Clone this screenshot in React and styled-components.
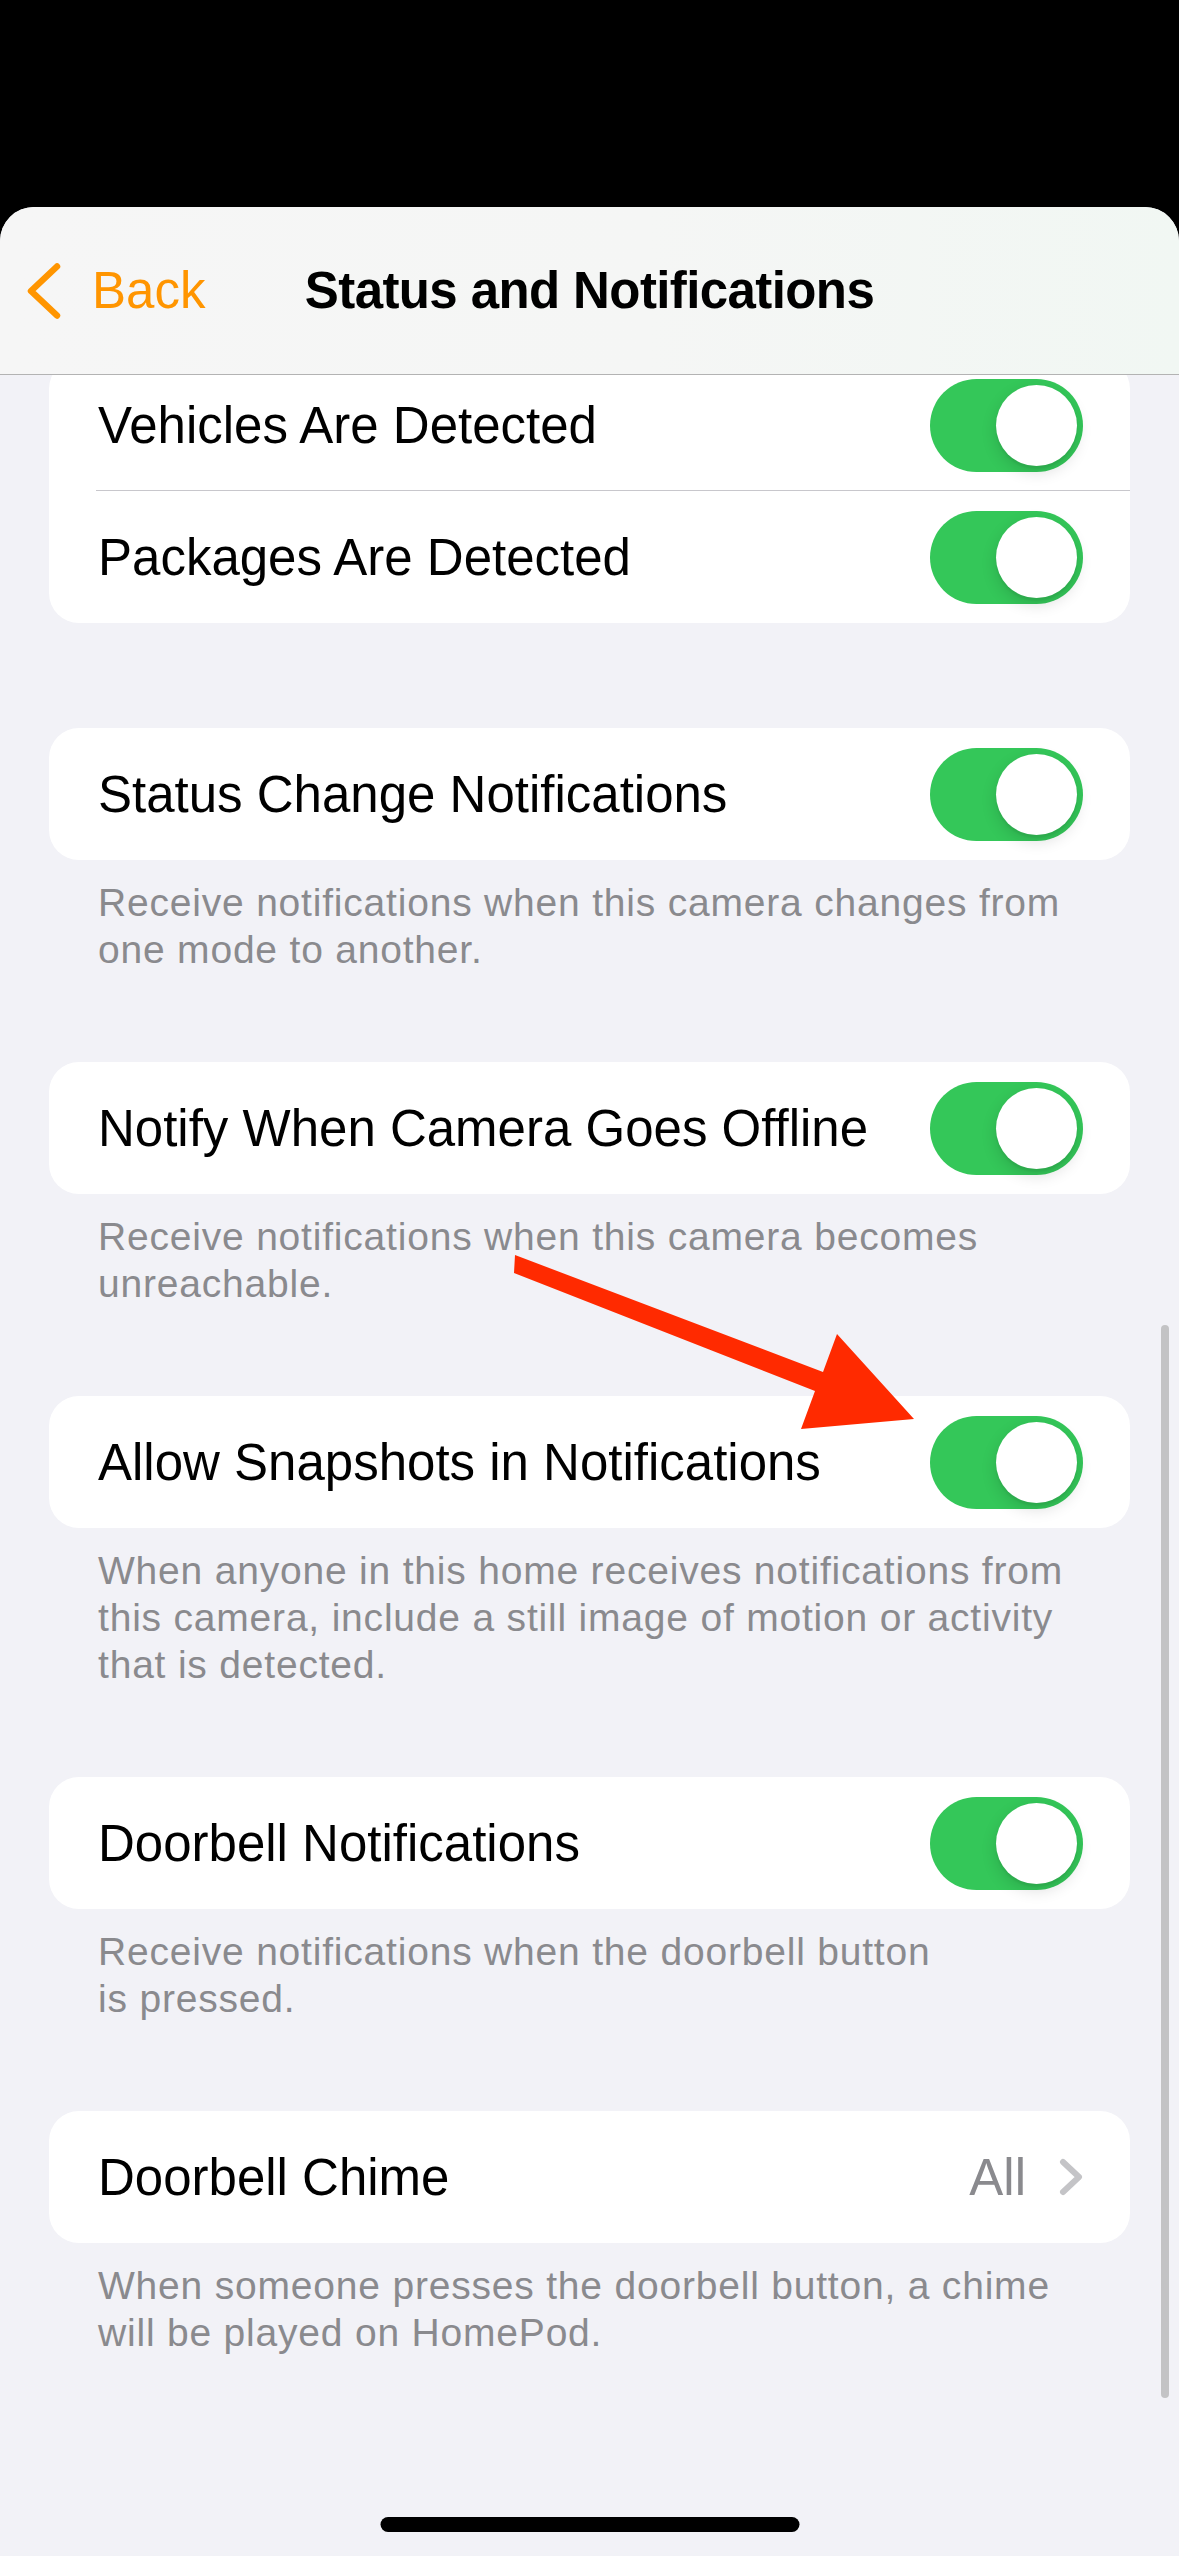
import styled, { createGlobalStyle } from "styled-components";

const GlobalStyle = createGlobalStyle`
  html, body {
    margin: 0;
    padding: 0;
    background: #000;
  }
  body {
    font-family: "Liberation Sans", Arial, sans-serif;
    -webkit-font-smoothing: antialiased;
  }
`;

const Phone = styled.div`
  position: relative;
  width: 1179px;
  height: 2556px;
  background: #000;
  display: flex;
  flex-direction: column;
  overflow: hidden;
`;

const StatusArea = styled.div`
  height: 207px;
  flex-shrink: 0;
`;

const Sheet = styled.div`
  position: relative;
  flex: 1;
  display: flex;
  flex-direction: column;
  min-height: 0;
  background: #f2f2f7;
  border-radius: 34px 34px 0 0;
  overflow: hidden;
`;

const NavBar = styled.header`
  position: relative;
  z-index: 2;
  height: 167px;
  flex-shrink: 0;
  display: grid;
  grid-template-columns: 1fr auto 1fr;
  align-items: center;
  background: linear-gradient(90deg, #f6f6f6 0%, #f5f6f5 55%, #f1f7f3 100%);
  border-bottom: 1px solid #b3b3b3;
`;

const BackButton = styled.button`
  display: flex;
  align-items: center;
  gap: 30px;
  justify-self: start;
  padding: 0 0 0 26px;
  border: none;
  background: none;
  color: #ff9500;
  font-family: inherit;
  font-size: 51px;
  cursor: pointer;
`;

const Title = styled.h1`
  margin: 0;
  font-size: 51px;
  font-weight: 700;
  letter-spacing: -0.6px;
  color: #000;
`;

const Content = styled.main`
  flex: 1;
  overflow: hidden;
  padding: 0 49px;
`;

const Section = styled.section`
  margin-bottom: ${(p) => (p.$hasFooter ? "89px" : "105px")};
  &:first-child {
    margin-top: -16px;
  }
`;

const Card = styled.div`
  background: #fff;
  border-radius: 30px;
  overflow: hidden;
`;

const Row = styled.div`
  position: relative;
  height: 132px;
  display: flex;
  align-items: center;
  justify-content: space-between;
  padding: 0 47px 0 49px;
  &::after {
    content: "";
    display: ${(p) => (p.$divider ? "block" : "none")};
    position: absolute;
    left: 47px;
    right: 0;
    bottom: 0;
    height: 1px;
    background: #c8c7cc;
  }
`;

const Label = styled.span`
  font-size: 51px;
  color: #000;
`;

const Track = styled.div`
  position: relative;
  width: 153px;
  height: 93px;
  border-radius: 47px;
  background: ${(p) => (p.$on ? "#34c759" : "#e9e9eb")};
  flex-shrink: 0;
`;

const Knob = styled.div`
  position: absolute;
  top: 6px;
  ${(p) => (p.$on ? "right: 6px;" : "left: 6px;")}
  width: 81px;
  height: 81px;
  border-radius: 50%;
  background: #fff;
  box-shadow: 0 6px 16px rgba(0, 0, 0, 0.14), 0 3px 2px rgba(0, 0, 0, 0.05);
`;

const Value = styled.div`
  display: flex;
  align-items: center;
  gap: 33px;
  font-size: 51px;
  color: #8a8a8e;
`;

const Footer = styled.p`
  margin: 0;
  padding: 19px 40px 0 49px;
  font-size: 39px;
  line-height: 47px;
  letter-spacing: 0.8px;
  color: #8a8a8e;
  white-space: pre-line;
`;

const ScrollIndicator = styled.div`
  position: absolute;
  top: 1325px;
  right: 10px;
  width: 8px;
  height: 1073px;
  border-radius: 4px;
  background: #c3c3c5;
`;

const HomeIndicator = styled.div`
  position: absolute;
  bottom: 24px;
  left: 50%;
  transform: translateX(-50%);
  width: 419px;
  height: 15px;
  border-radius: 8px;
  background: #000;
`;

const Annotation = styled.svg`
  position: absolute;
  top: 0;
  left: 0;
  width: 1179px;
  height: 2556px;
  pointer-events: none;
`;

const Switch = ({ on }) => (
  <Track $on={on}>
    <Knob $on={on} />
  </Track>
);

const sections = [
  {
    rows: [
      { label: "Vehicles Are Detected", toggle: true },
      { label: "Packages Are Detected", toggle: true },
    ],
  },
  {
    rows: [{ label: "Status Change Notifications", toggle: true }],
    footer: "Receive notifications when this camera changes from\none mode to another.",
  },
  {
    rows: [{ label: "Notify When Camera Goes Offline", toggle: true }],
    footer: "Receive notifications when this camera becomes\nunreachable.",
  },
  {
    rows: [{ label: "Allow Snapshots in Notifications", toggle: true }],
    footer:
      "When anyone in this home receives notifications from\nthis camera, include a still image of motion or activity\nthat is detected.",
  },
  {
    rows: [{ label: "Doorbell Notifications", toggle: true }],
    footer: "Receive notifications when the doorbell button\nis pressed.",
  },
  {
    rows: [{ label: "Doorbell Chime", value: "All" }],
    footer: "When someone presses the doorbell button, a chime\nwill be played on HomePod.",
  },
];

export default function App() {
  return (
    <>
      <GlobalStyle />
      <Phone>
        <StatusArea />
        <Sheet>
          <NavBar>
            <BackButton>
              <svg width="36" height="58" viewBox="0 0 36 58">
                <polyline
                  points="31,4.5 5,29 31,53.5"
                  fill="none"
                  stroke="#ff9500"
                  strokeWidth="6.5"
                  strokeLinecap="round"
                  strokeLinejoin="round"
                />
              </svg>
              Back
            </BackButton>
            <Title>Status and Notifications</Title>
            <div />
          </NavBar>

          <Content>
            {sections.map((s, i) => (
              <Section key={i} $hasFooter={!!s.footer}>
                <Card>
                  {s.rows.map((r, j) => (
                    <Row key={r.label} $divider={j < s.rows.length - 1}>
                      <Label>{r.label}</Label>
                      {r.toggle ? (
                        <Switch on />
                      ) : (
                        <Value>
                          {r.value}
                          <svg width="24" height="38" viewBox="0 0 24 38">
                            <polyline
                              points="4,4 20,19 4,34"
                              fill="none"
                              stroke="#c4c4c7"
                              strokeWidth="6"
                              strokeLinecap="round"
                              strokeLinejoin="round"
                            />
                          </svg>
                        </Value>
                      )}
                    </Row>
                  ))}
                </Card>
                {s.footer && <Footer>{s.footer}</Footer>}
              </Section>
            ))}
          </Content>
        </Sheet>

        <ScrollIndicator />
        <HomeIndicator />

        <Annotation viewBox="0 0 1179 2556">
          <polygon
            points="515,1255 823,1372 837,1334 914,1419 801,1429 815,1391 514,1273"
            fill="#ff2a00"
          />
        </Annotation>
      </Phone>
    </>
  );
}
